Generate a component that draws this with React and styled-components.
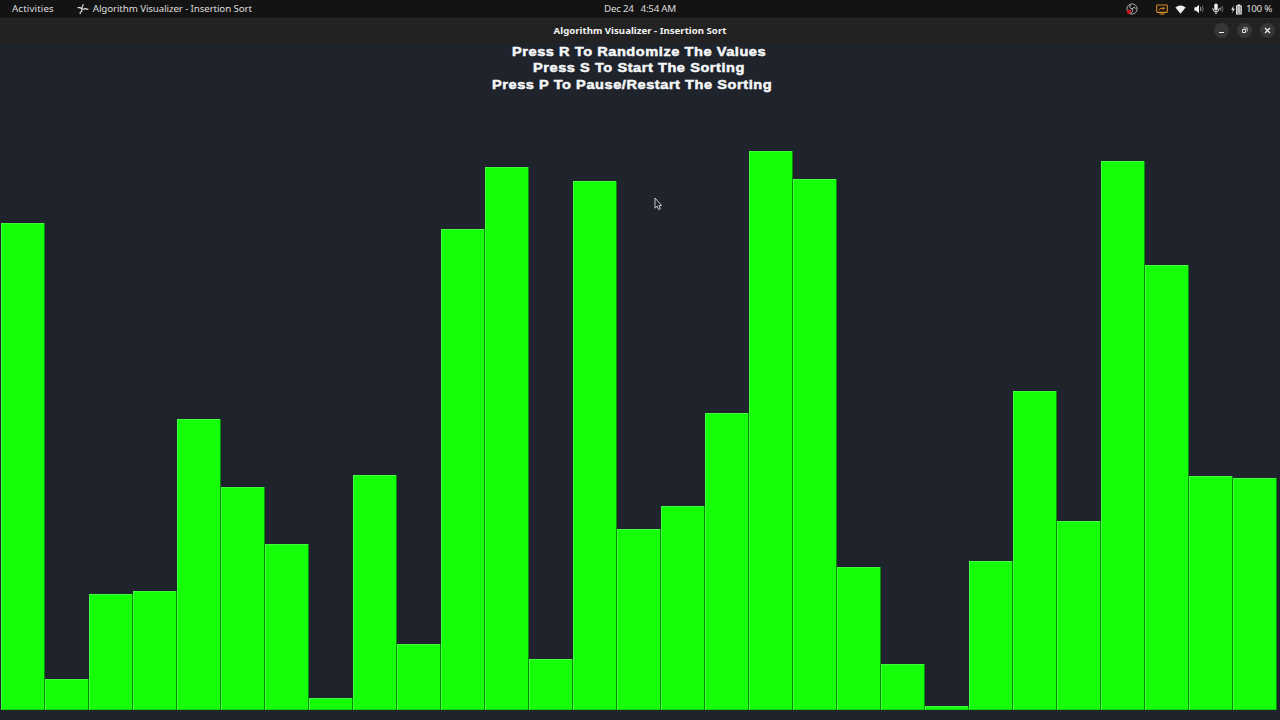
import styled, { createGlobalStyle } from "styled-components"

const GlobalStyle = createGlobalStyle`
    * {
        box-sizing: border-box;
    }

    body {
        margin: 0;
        background: #1f232c;
        overflow: hidden;
    }
`

const Desktop = styled.div`
    width: 1280px;
    height: 720px;
    display: flex;
    flex-direction: column;
    font-family: "Noto Sans", "Open Sans", sans-serif;
`

const TopBar = styled.header`
    height: 18px;
    flex: none;
    display: grid;
    grid-template-columns: 1fr auto 1fr;
    background: #131313;
    color: #dedede;
    font-size: 9.8px;
    line-height: 18px;
    white-space: pre;
`

const TopLeft = styled.div`
    display: flex;
    align-items: center;
    padding-left: 12px;

    svg {
        margin: 0 3.5px 0 23.5px;
    }
`

const Label = styled.span`
    letter-spacing: ${({ $spacing }) => $spacing || 0}px;
`

const Tray = styled.div`
    display: flex;
    align-items: center;
    justify-content: flex-end;
    padding-right: 8px;

    svg {
        flex: none;
    }
`

const TrayIcon = styled.svg`
    margin-right: ${({ $gap }) => $gap}px;
`

const TitleBar = styled.div`
    height: 25px;
    flex: none;
    display: grid;
    grid-template-columns: 1fr auto 1fr;
    align-items: center;
    padding-bottom: 2px;
    background: #222222;
    border-top: 1px solid #292929;
    color: #f4f4f4;
    font-size: 9.6px;
    font-weight: 700;
`

const WindowButtons = styled.div`
    display: flex;
    justify-content: flex-end;
    gap: 8px;
    padding-right: 5px;
`

const WindowButton = styled.div`
    width: 15px;
    height: 15px;
    display: flex;
    align-items: center;
    justify-content: center;
    border-radius: 50%;
    background: #363636;
`

const Canvas = styled.main`
    position: relative;
    flex: 1;
    display: flex;
    flex-direction: column;
    padding: 0 3px 10px 1px;
    background: #1f232c;
`

const Instructions = styled.div`
    color: #f5f7f8;
    font-family: "Liberation Sans", Arial, sans-serif;
    font-size: 13px;
    font-weight: 700;
    -webkit-text-stroke: 0.5px #f5f7f8;
`

const Line = styled.div`
    width: max-content;
    height: 16.4px;
    margin-left: ${({ $indent }) => $indent}px;
    line-height: 18px;
    letter-spacing: 0.5px;
    white-space: nowrap;
    transform: scaleX(1.12);
    transform-origin: left;
`

const Bars = styled.div`
    flex: 1;
    display: flex;
    align-items: flex-end;
`

const Bar = styled.div`
    width: 44px;
    flex: none;
    background: #14ff08;
    border-right: 1px solid #078b08;
    box-shadow: inset 1px 1px #42ff3d, inset 0 -1px #0fd50c;
`

const Pointer = styled.svg`
    position: absolute;
    left: 654px;
    top: 154px;
`

const heights = [
    487, 31, 116, 119, 291, 223, 166, 12, 235, 66,
    481, 543, 51, 529, 181, 204, 297, 559, 531, 143,
    46, 4, 149, 319, 189, 549, 445, 234, 232,
]

const AppIcon = () => (
    <svg width="12" height="12" viewBox="0 0 12 12" fill="none" stroke="#e2e2e2" strokeWidth="1.1" strokeLinecap="round">
        <path d="M1 4.6h2l1.6 1.2L6.2 1.4M4.6 5.8l2.2.6L8 5.4l1.2.7H11M4.6 5.8l.3 2.4L3.2 9.4v1.4" />
    </svg>
)

const ObsIcon = () => (
    <TrayIcon $gap={18} width="12" height="12" viewBox="0 0 12 12" fill="none">
        <circle cx="6" cy="6" r="5.1" stroke="#bcbcbc" strokeWidth="0.9" />
        <path d="M6 6C3.6 5.5 3.2 3.3 4.6 2M6 6c1-2 3.4-1.8 4.1-.2M6 6c1.3 1.8.2 3.8-1.6 4" stroke="#bcbcbc" strokeWidth="1" />
        <circle cx="3" cy="8.6" r="2.2" fill="#d0141c" />
    </TrayIcon>
)

const ShareIcon = () => (
    <TrayIcon $gap={7.5} width="12" height="11" viewBox="0 0 12 11" fill="none" stroke="#d98a2b">
        <rect x="0.7" y="1" width="10.6" height="7.4" rx="0.8" strokeWidth="1.1" />
        <path d="M3.7 6.4V5.3q0-1 1.2-1h2.2" strokeWidth="1" />
        <path d="M6.8 2.5 9 4.3 6.8 6.2z" fill="#d98a2b" stroke="none" />
        <path d="M3.5 10h5" strokeWidth="1.1" />
    </TrayIcon>
)

const WifiIcon = () => (
    <TrayIcon $gap={8} width="11" height="9" viewBox="0 0 11 9">
        <path d="M.4 2.6Q5.5-1.6 10.6 2.6L5.5 8.8z" fill="#f1f1f1" />
    </TrayIcon>
)

const VolumeIcon = () => (
    <TrayIcon $gap={7} width="11" height="10" viewBox="0 0 11 10" fill="none">
        <path d="M.4 3.2h1.8L5 .7v8.6L2.2 6.8H.4z" fill="#f1f1f1" />
        <path d="M6.4 3.2q1.2 1.8 0 3.6" stroke="#d2d2d2" strokeWidth="0.9" />
        <path d="M8.2 1.8q2.2 3.2 0 6.4" stroke="#7c7c7c" strokeWidth="0.9" />
    </TrayIcon>
)

const MicIcon = () => (
    <TrayIcon $gap={7} width="12" height="12" viewBox="0 0 12 12" fill="none">
        <rect x="2.3" y="0.6" width="3.4" height="6.8" rx="1.7" fill="#f1f1f1" />
        <path d="M.8 5.2q0 3.6 3.2 3.6t3.2-3.6M4 8.8v2.4" stroke="#f1f1f1" strokeWidth="1" />
        <path d="M9 4.2q-1.1 1.8 0 3.6" stroke="#c0c0c0" strokeWidth="0.8" />
        <path d="M10.4 3.2q1 2.8 0 5.6" stroke="#777" strokeWidth="0.8" />
    </TrayIcon>
)

const BatteryIcon = () => (
    <TrayIcon $gap={3} width="12" height="11" viewBox="0 0 12 11">
        <path d="M2.5 1.8.3 5.8h1.6L1.2 9l2.6-4.2H2.2z" fill="#f1f1f1" />
        <path d="M6.5.4h2.8v1h1.5v9.2H5V1.4h1.5z" fill="#f1f1f1" />
        <path d="M6.2 2.7h3.4v6.7H6.2z" fill="#bdbdbd" stroke="#575757" strokeWidth="0.5" />
    </TrayIcon>
)

const App = () => {
    return <>
        <GlobalStyle />
        <Desktop>
            <TopBar>
                <TopLeft>
                    <Label $spacing={0.1}>Activities</Label>
                    <AppIcon />
                    <Label $spacing={-0.13}>Algorithm Visualizer - Insertion Sort</Label>
                </TopLeft>
                <Label $spacing={-0.25}>{"Dec 24   4:54 AM"}</Label>
                <Tray>
                    <ObsIcon />
                    <ShareIcon />
                    <WifiIcon />
                    <VolumeIcon />
                    <MicIcon />
                    <BatteryIcon />
                    <Label $spacing={-0.3}>100 %</Label>
                </Tray>
            </TopBar>
            <TitleBar>
                <span />
                <Label $spacing={0.03}>Algorithm Visualizer - Insertion Sort</Label>
                <WindowButtons>
                    <WindowButton>
                        <svg width="7" height="7" viewBox="0 0 7 7" stroke="#f0f0f0"><path d="M1 5.5h5" /></svg>
                    </WindowButton>
                    <WindowButton>
                        <svg width="7" height="7" viewBox="0 0 7 7" fill="none" stroke="#e6e6e6">
                            <path d="M1.5 2.5h3v3h-3z" />
                            <path d="M2.5 .9h3.7v3.7" strokeWidth="0.8" />
                        </svg>
                    </WindowButton>
                    <WindowButton>
                        <svg width="7" height="7" viewBox="0 0 7 7" stroke="#f0f0f0" strokeWidth="1.2"><path d="m1 1 5 5M6 1 1 6" /></svg>
                    </WindowButton>
                </WindowButtons>
            </TitleBar>
            <Canvas>
                <Instructions>
                    <Line $indent={510.5}>Press R To Randomize The Values</Line>
                    <Line $indent={532}>Press S To Start The Sorting</Line>
                    <Line $indent={491}>Press P To Pause/Restart The Sorting</Line>
                </Instructions>
                <Bars>
                    {
                        heights.map((height, i) => <Bar key={i} style={{ height }} />)
                    }
                </Bars>
                <Pointer width="8" height="14" viewBox="0 0 8 14">
                    <path d="M1 1v10.2l2.2-2 1.5 3.4 1.7-.8L5 8.6h2.6z" fill="#20232b" stroke="#d5d7da" strokeWidth="0.9" />
                </Pointer>
            </Canvas>
        </Desktop>
    </>
}

export default App
